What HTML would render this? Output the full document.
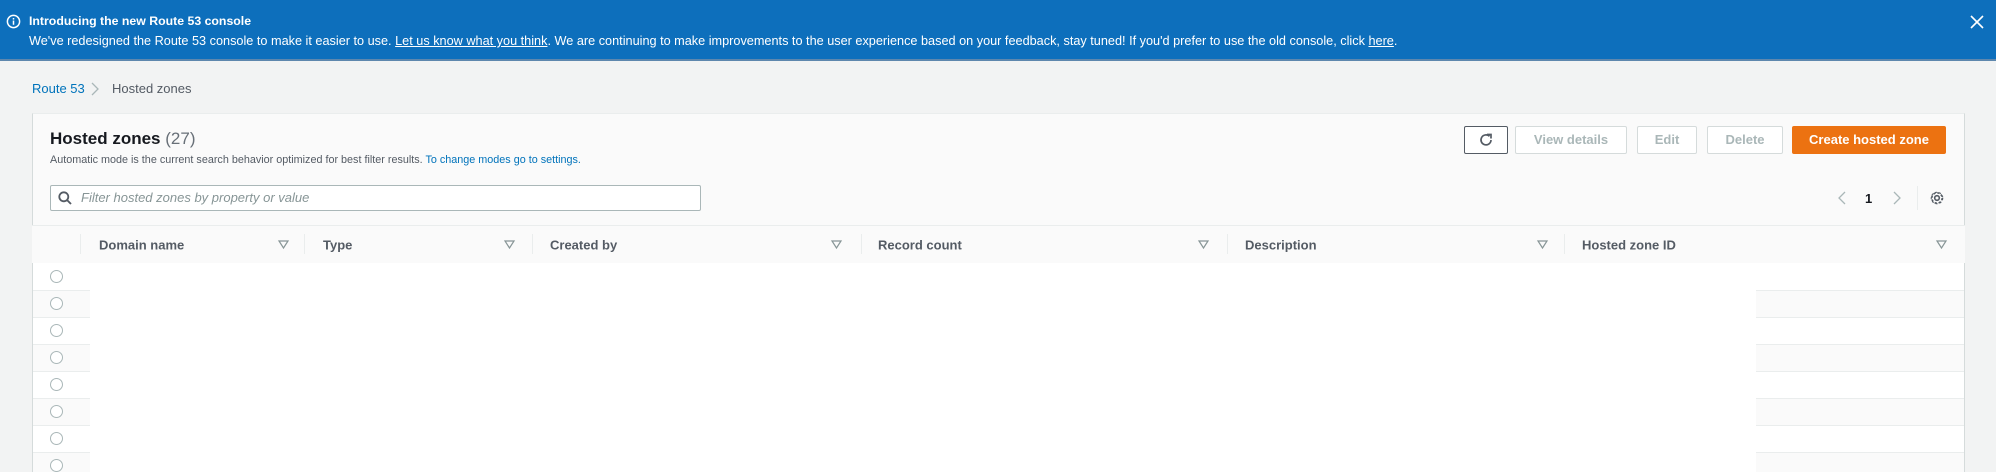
<!DOCTYPE html>
<html style="width:1996px;height:472px;overflow:hidden"><head><meta charset="utf-8"><style>
*{box-sizing:border-box;margin:0;padding:0}
body{width:1996px;height:472px;overflow:hidden;background:#f2f3f3;font-family:"Liberation Sans",sans-serif;position:relative;color:#16191f}
.abs{position:absolute;white-space:nowrap}
#banner{position:absolute;left:0;top:0;width:1996px;height:61px;background:#0d6fbc;border-bottom:2px solid #5e87ad;color:#fff}
a{color:inherit}
.panel{position:absolute;left:32px;top:113px;width:1933px;height:359px;background:#fafafa;border-left:1px solid #d5dbdb;border-right:1px solid #d5dbdb;border-top:1px solid #eaeded}
.btn{position:absolute;top:126px;height:28px;border:1px solid #d5dbdb;background:#fff;border-radius:2px;color:#aab7b8;font-weight:bold;font-size:13px;text-align:center;line-height:26px}
.hdr{position:absolute;left:32px;top:225px;width:1933px;height:38px;background:#fafafa;border-top:1px solid #eaeded}
.col{position:absolute;top:245px;transform:translateY(-50%);font-weight:bold;font-size:13px;color:#545b64}
.div{position:absolute;top:234px;width:1px;height:20px;background:#eaeded}
.row{position:absolute;left:33px;width:1931px;height:27px;border-top:1px solid #eaeded}
.radio{position:absolute;left:50px;width:13px;height:13px;border:1.5px solid #aab7b8;border-radius:50%;background:#fff}
</style></head><body>
<div id="banner">
 <svg class="abs" style="left:6px;top:14px" width="15" height="15" viewBox="0 0 16 16"><circle cx="8" cy="8" r="6.5" fill="none" stroke="#fff" stroke-width="1.6"/><rect x="7.2" y="7" width="1.6" height="4.5" fill="#fff"/><rect x="7.2" y="4.3" width="1.6" height="1.6" fill="#fff"/></svg>
 <div class="abs" style="left:29px;top:14px;font-size:12.3px;font-weight:bold">Introducing the new Route 53 console</div>
 <div class="abs" style="left:29px;top:34px;font-size:12.7px">We've redesigned the Route 53 console to make it easier to use. <a href="#" style="text-decoration:underline">Let us know what you think</a>. We are continuing to make improvements to the user experience based on your feedback, stay tuned! If you'd prefer to use the old console, click <a href="#" style="text-decoration:underline">here</a>.</div>
 <svg class="abs" style="left:1970px;top:15px" width="14" height="14" viewBox="0 0 14 14"><path d="M1 1L13 13M13 1L1 13" stroke="#fff" stroke-width="1.6"/></svg>
</div>
<div class="abs" style="left:32px;top:81px;font-size:13px;color:#0073bb">Route 53</div>
<svg class="abs" style="left:91px;top:82px" width="8" height="14" viewBox="0 0 8 14"><path d="M1 1L7 7L1 13" fill="none" stroke="#aab7b8" stroke-width="1.3"/></svg>
<div class="abs" style="left:112px;top:81px;font-size:13px;color:#545b64">Hosted zones</div>

<div class="panel"></div>
<div class="abs" style="left:50px;top:129px;font-size:17px;font-weight:bold">Hosted zones <span style="font-weight:normal;color:#687078">(27)</span></div>
<div class="abs" style="left:50px;top:154px;font-size:10.8px;color:#545b64">Automatic mode is the current search behavior optimized for best filter results. <span style="color:#0073bb">To change modes go to settings.</span></div>
<div class="abs" style="left:50px;top:185px;width:651px;height:26px;background:#fff;border:1px solid #aab7b8;border-radius:2px"></div>
<svg class="abs" style="left:58px;top:191px" width="14" height="14" viewBox="0 0 14 14"><circle cx="5.8" cy="5.8" r="4.5" fill="none" stroke="#545b64" stroke-width="1.8"/><path d="M9 9L13 13" stroke="#545b64" stroke-width="1.9"/></svg>
<div class="abs" style="left:81px;top:190px;font-size:13px;font-style:italic;color:#879596">Filter hosted zones by property or value</div>

<div class="btn" style="left:1464px;width:44px;border-color:#545b64"></div>
<svg class="abs" style="left:1478px;top:132px" width="16" height="16" viewBox="0 0 16 16"><path d="M13 8A5 5 0 1 1 11.5 4.3" fill="none" stroke="#545b64" stroke-width="1.7"/><path d="M9 2.5H13V6.5" fill="none" stroke="#545b64" stroke-width="1.7"/></svg>
<div class="btn" style="left:1515px;width:112px">View details</div>
<div class="btn" style="left:1637px;width:60px">Edit</div>
<div class="btn" style="left:1707px;width:76px">Delete</div>
<div class="btn" style="left:1792px;width:154px;background:#ec7211;border-color:#ec7211;color:#fff">Create hosted zone</div>

<svg class="abs" style="left:1838px;top:191px" width="8" height="14" viewBox="0 0 8 14"><path d="M7 1L1 7L7 13" fill="none" stroke="#aab7b8" stroke-width="1.3"/></svg>
<div class="abs" style="left:1865px;top:191px;font-size:13px;font-weight:bold">1</div>
<svg class="abs" style="left:1893px;top:191px" width="8" height="14" viewBox="0 0 8 14"><path d="M1 1L7 7L1 13" fill="none" stroke="#aab7b8" stroke-width="1.3"/></svg>
<div class="abs" style="left:1917px;top:186px;width:1px;height:24px;background:#eaeded"></div>
<svg class="abs" style="left:1929px;top:190px" width="16" height="16" viewBox="0 0 16 16"><circle cx="8" cy="8" r="2.3" fill="none" stroke="#545b64" stroke-width="1.6"/><circle cx="8" cy="8" r="5.2" fill="none" stroke="#545b64" stroke-width="1.6" stroke-dasharray="2.4 1.7"/><circle cx="8" cy="8" r="5.8" fill="none" stroke="#545b64" stroke-width="1" stroke-dasharray="2 2.2"/></svg>

<div class="hdr"></div>
<div class="div" style="left:80px"></div><div class="div" style="left:304px"></div><div class="div" style="left:532px"></div><div class="div" style="left:861px"></div><div class="div" style="left:1227px"></div><div class="div" style="left:1564px"></div>
<div class="col" style="left:99px">Domain name</div>
<div class="col" style="left:323px">Type</div>
<div class="col" style="left:550px">Created by</div>
<div class="col" style="left:878px">Record count</div>
<div class="col" style="left:1245px">Description</div>
<div class="col" style="left:1582px">Hosted zone ID</div>
<svg class="abs" style="left:0;top:0" width="1996" height="472"><g fill="none" stroke="#879596" stroke-width="1.2">
<path d="M279 241H288L283.5 248Z"/><path d="M505 241H514L509.5 248Z"/><path d="M832 241H841L836.5 248Z"/><path d="M1199 241H1208L1203.5 248Z"/><path d="M1538 241H1547L1542.5 248Z"/><path d="M1937 241H1946L1941.5 248Z"/></g></svg>

<div class="row" style="top:263px;background:#fff;border-top:none"></div>
<div class="row" style="top:290px;background:#fafafa"></div>
<div class="row" style="top:317px;background:#fff"></div>
<div class="row" style="top:344px;background:#fafafa"></div>
<div class="row" style="top:371px;background:#fff"></div>
<div class="row" style="top:398px;background:#fafafa"></div>
<div class="row" style="top:425px;background:#fff"></div>
<div class="row" style="top:452px;background:#fafafa;height:20px"></div>
<div class="abs" style="left:90px;top:263px;width:1666px;height:209px;background:#fff"></div>
<div class="radio" style="top:270px"></div>
<div class="radio" style="top:297px"></div>
<div class="radio" style="top:324px"></div>
<div class="radio" style="top:351px"></div>
<div class="radio" style="top:378px"></div>
<div class="radio" style="top:405px"></div>
<div class="radio" style="top:432px"></div>
<div class="radio" style="top:459px"></div>
</body></html>
